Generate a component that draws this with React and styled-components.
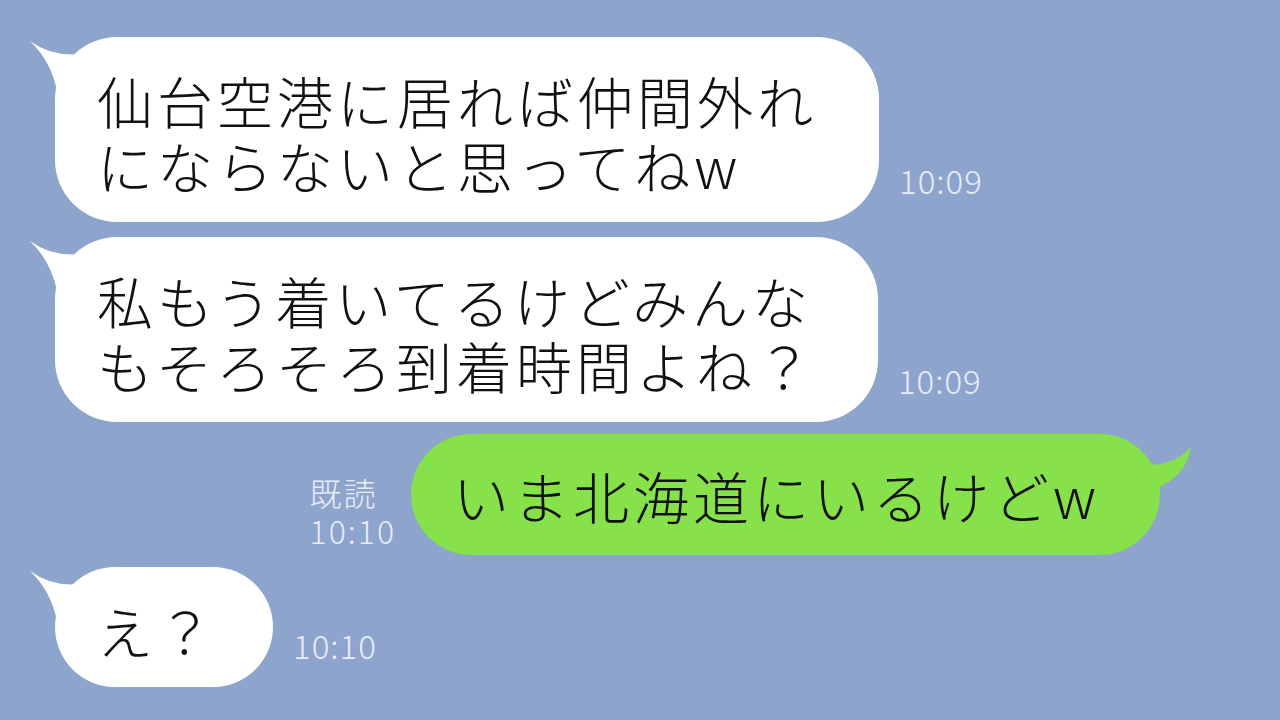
import React from "react";
import styled, { createGlobalStyle } from "styled-components";

const GlobalStyle = createGlobalStyle`
  html, body {
    margin: 0;
    padding: 0;
    background: #8da4cc;
  }
`;

const Screen = styled.div`
  width: 1280px;
  height: 720px;
  overflow: hidden;
  background: #8da4cc;
  display: flex;
  flex-direction: column;
  padding-top: 37px;
  box-sizing: border-box;
  font-family: "Noto Sans CJK JP", "Noto Sans", sans-serif;
`;

const Row = styled.div`
  display: flex;
  align-items: flex-end;
  justify-content: ${(p) => (p.$mine ? "flex-end" : "flex-start")};
  padding: ${(p) => (p.$mine ? "0 120px 0 0" : "0 0 0 55px")};
  margin-bottom: ${(p) => p.$gap || 0}px;
  gap: ${(p) => (p.$mine ? 15 : 20)}px;
`;

const Bubble = styled.div`
  position: relative;
  background: ${(p) => (p.$mine ? "#86e14b" : "#ffffff")};
  color: #111;
  border-radius: 62px;
  padding: ${(p) =>
    p.$mine ? "28px 60px 28px 42px" : `30px ${p.$right || 62}px 25px 42px`};
  font-size: 56px;
  line-height: 65px;
  letter-spacing: 4px;
  font-weight: 300;
  white-space: nowrap;
`;

const Tail = styled.svg`
  position: absolute;
  top: 0;
  ${(p) => (p.$mine ? "right: -40px;" : "left: -30px;")}
  width: 70px;
  height: 70px;
  overflow: visible;
`;

const Time = styled.div`
  color: #e6edf8;
  font-size: 33px;
  line-height: 36px;
  letter-spacing: 1px;
  font-weight: 300;
  margin-bottom: 24px;
`;

const ReadInfo = styled.div`
  display: flex;
  flex-direction: column;
  color: #e6edf8;
  font-size: 32px;
  line-height: 38px;
  font-weight: 300;
  letter-spacing: 2px;
  margin-bottom: 6px;
`;

const LeftTail = ({ fill }) => (
  <Tail viewBox="0 0 70 70">
    <path
      d="M5 4 Q 30 22 62 16 L 70 20 L 70 60 L 32 54 Q 26 24 5 4 Z"
      fill={fill}
    />
  </Tail>
);

const RightTail = ({ fill }) => (
  <Tail $mine viewBox="0 0 70 70">
    <path
      d="M61 13 Q 46 30 20 31 L 0 28 L 0 65 L 24 55 Q 56 44 61 13 Z"
      fill={fill}
    />
  </Tail>
);

const Incoming = ({ lines, time, gap, right }) => (
  <Row $gap={gap}>
    <Bubble $right={right}>
      <LeftTail fill="#ffffff" />
      {lines.map((l) => (
        <div key={l}>{l}</div>
      ))}
    </Bubble>
    <Time>{time}</Time>
  </Row>
);

export default function App() {
  return (
    <>
      <GlobalStyle />
      <Screen>
        <Incoming
          gap={15}
          lines={["仙台空港に居れば仲間外れ", "にならないと思ってねw"]}
          time="10:09"
        />
        <Incoming
          gap={12}
          lines={["私もう着いてるけどみんな", "もそろそろ到着時間よね？"]}
          time="10:09"
        />
        <Row $mine $gap={12}>
          <ReadInfo>
            <span>既読</span>
            <span>10:10</span>
          </ReadInfo>
          <Bubble $mine>
            <RightTail fill="#86e14b" />
            いま北海道にいるけどw
          </Bubble>
        </Row>
        <Incoming lines={["え？"]} time="10:10" right={56} />
      </Screen>
    </>
  );
}
